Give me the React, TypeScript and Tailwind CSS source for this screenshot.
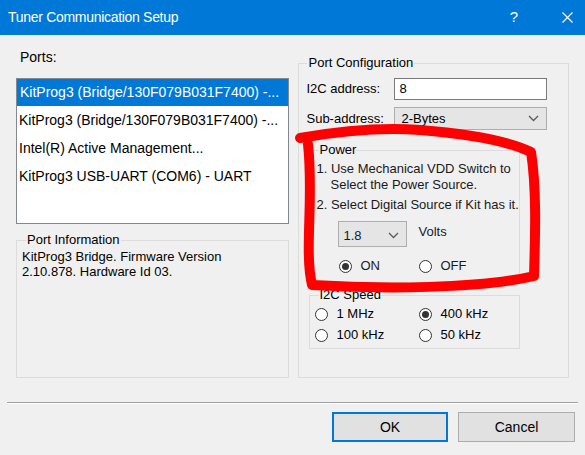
import React from "react";

const ports = [
  "KitProg3 (Bridge/130F079B031F7400) -...",
  "KitProg3 (Bridge/130F079B031F7400) -...",
  "Intel(R)  Active  Management...",
  "KitProg3 USB-UART (COM6) - UART",
];

function Chevron() {
  return (
    <svg width="11" height="7" viewBox="0 0 11 7" className="shrink-0">
      <polyline points="1,1 5.5,5.5 10,1" fill="none" stroke="#5a5a5a" strokeWidth="1.3" />
    </svg>
  );
}

function Radio({ checked, label, width }: { checked?: boolean; label: string; width?: string }) {
  return (
    <div className={`flex items-center h-[16px] ${width ?? ""}`}>
      <div className="w-[13px] h-[13px] rounded-full border border-[#333333] bg-white flex items-center justify-center shrink-0">
        {checked && <div className="w-[7px] h-[7px] rounded-full bg-[#333333]" />}
      </div>
      <span className="ml-[8px] text-[13px] leading-[16px]">{label}</span>
    </div>
  );
}

export default function App() {
  return (
    <div className="relative w-[585px] h-[455px] overflow-hidden bg-[#f0f0f0] text-black font-['Liberation_Sans',Arial,sans-serif]">
      {/* Title bar */}
      <div className="h-[35px] bg-[#0078d7] flex items-center pl-[8px] text-white">
        <span className="text-[14px] tracking-[-0.3px]">Tuner Communication Setup</span>
        <span className="ml-auto w-[30px] mr-[28px] text-center text-[15px]">?</span>
        <div className="w-[20px] mr-[8px] flex justify-center">
          <svg width="11" height="11" viewBox="0 0 11 11">
            <path d="M0.5 0.5 L10.5 10.5 M10.5 0.5 L0.5 10.5" stroke="#ffffff" strokeWidth="1.1" />
          </svg>
        </div>
      </div>

      {/* Body */}
      <div className="flex px-[16px] pt-[13px] gap-[9px]">
        {/* Left column */}
        <div className="w-[275px] flex flex-col">
          <div className="text-[14px] leading-[18px] pl-[4px] mb-[12px]">Ports:</div>
          <div className="h-[146px] border border-[#828790] bg-white flex flex-col">
            {ports.map((p, i) => (
              <div
                key={i}
                className={`${i === 0 ? "h-[27px] bg-[#0078d7] text-white border border-dotted border-[#8a5a2a]" : "h-[28px] pl-[1px]"} flex items-center pl-[2px] text-[14px] whitespace-nowrap`}
              >
                {p}
              </div>
            ))}
          </div>
          <fieldset className="mt-[7px] h-[147px] border border-[#dcdcdc]">
            <legend className="ml-[9px] px-[1px] text-[13px] leading-[18px]">Port Information</legend>
            <div className="pl-[5px] text-[13px] leading-[15px]">
              <div>KitProg3 Bridge. Firmware Version</div>
              <div>2.10.878. Hardware Id 03.</div>
            </div>
          </fieldset>
        </div>

        {/* Right column */}
        <div className="w-[272px] pt-[6px]">
          <fieldset className="h-[324px] border border-[#dcdcdc]">
            <legend className="ml-[8px] px-[1px] text-[13px] leading-[18px]">Port Configuration</legend>
            <div className="pt-[6px] pl-[7px] flex flex-col">
              <div className="flex items-center h-[22px]">
                <span className="w-[88px] text-[13px]">I2C address:</span>
                <div className="w-[153px] h-[22px] border border-[#7a7a7a] bg-white flex items-center pl-[4px] text-[13px]">8</div>
              </div>
              <div className="flex items-center h-[23px] mt-[7px]">
                <span className="w-[88px] text-[13px]">Sub-address:</span>
                <div className="w-[153px] h-[23px] border border-[#adadad] bg-[#e5e5e5] flex items-center justify-between pl-[6px] pr-[7px] text-[13px]">
                  <span>2-Bytes</span>
                  <Chevron />
                </div>
              </div>

              <fieldset className="ml-[3px] w-[211px] mt-[11px] h-[142px] border border-[#dcdcdc]">
                <legend className="ml-[9px] text-[13px] leading-[18px]">Power</legend>
                <div className="pl-[6px] text-[13px] leading-[16px] text-[#1a1a1a]">
                  <div className="pt-[2px]">1. Use Mechanical VDD Switch to</div>
                  <div className="pl-[14px]">Select the Power Source.</div>
                  <div className="mt-[4px]">2. Select Digital Source if Kit has it.</div>
                  <div className="mt-[8px] pl-[22px] flex items-center">
                    <div className="w-[69px] h-[26px] border border-[#adadad] bg-[#e5e5e5] flex items-center justify-between pl-[4px] pr-[7px] pt-[3px]">
                      <span>1.8</span>
                      <Chevron />
                    </div>
                    <span className="ml-[11px] -mt-[4px]">Volts</span>
                  </div>
                  <div className="mt-[11px] pl-[23px] flex items-center">
                    <Radio checked label="ON" width="w-[80px]" />
                    <Radio label="OFF" />
                  </div>
                </div>
              </fieldset>

              <fieldset className="ml-[3px] w-[211px] mt-[3px] h-[63px] border border-[#dcdcdc]">
                <legend className="ml-[9px] text-[13px] leading-[18px]">I2C Speed</legend>
                <div className="pl-[5px] pt-[2px] grid grid-cols-[104px_1fr] gap-y-[5px]">
                  <Radio label="1 MHz" />
                  <Radio checked label="400 kHz" />
                  <Radio label="100 kHz" />
                  <Radio label="50 kHz" />
                </div>
              </fieldset>
            </div>
          </fieldset>
        </div>
      </div>

      {/* Separator */}
      <div className="mt-[24px] mx-[7px] border-t border-[#a0a0a0] border-b border-b-white" />

      {/* Buttons */}
      <div className="mt-[8px] flex justify-end pr-[10px] gap-[10px]">
        <button className="w-[116px] h-[30px] border-2 border-[#0078d7] bg-[#e1e1e1] text-[14px]">OK</button>
        <button className="w-[117px] h-[30px] border border-[#adadad] bg-[#e1e1e1] text-[14px]">Cancel</button>
      </div>

      {/* Red annotation */}
      <svg className="absolute inset-0 pointer-events-none" width="585" height="455" viewBox="0 0 585 455">
        <path
          d="M300 138 C340 131, 380 127, 420 130 C470 134, 510 142, 531 152 C537 190, 535 240, 534 276 C480 289, 380 289, 312 285 C304 250, 314 200, 308 144"
          fill="none"
          stroke="#ff0000"
          strokeWidth="10"
          strokeLinecap="round"
          strokeLinejoin="round"
        />
      </svg>
    </div>
  );
}
